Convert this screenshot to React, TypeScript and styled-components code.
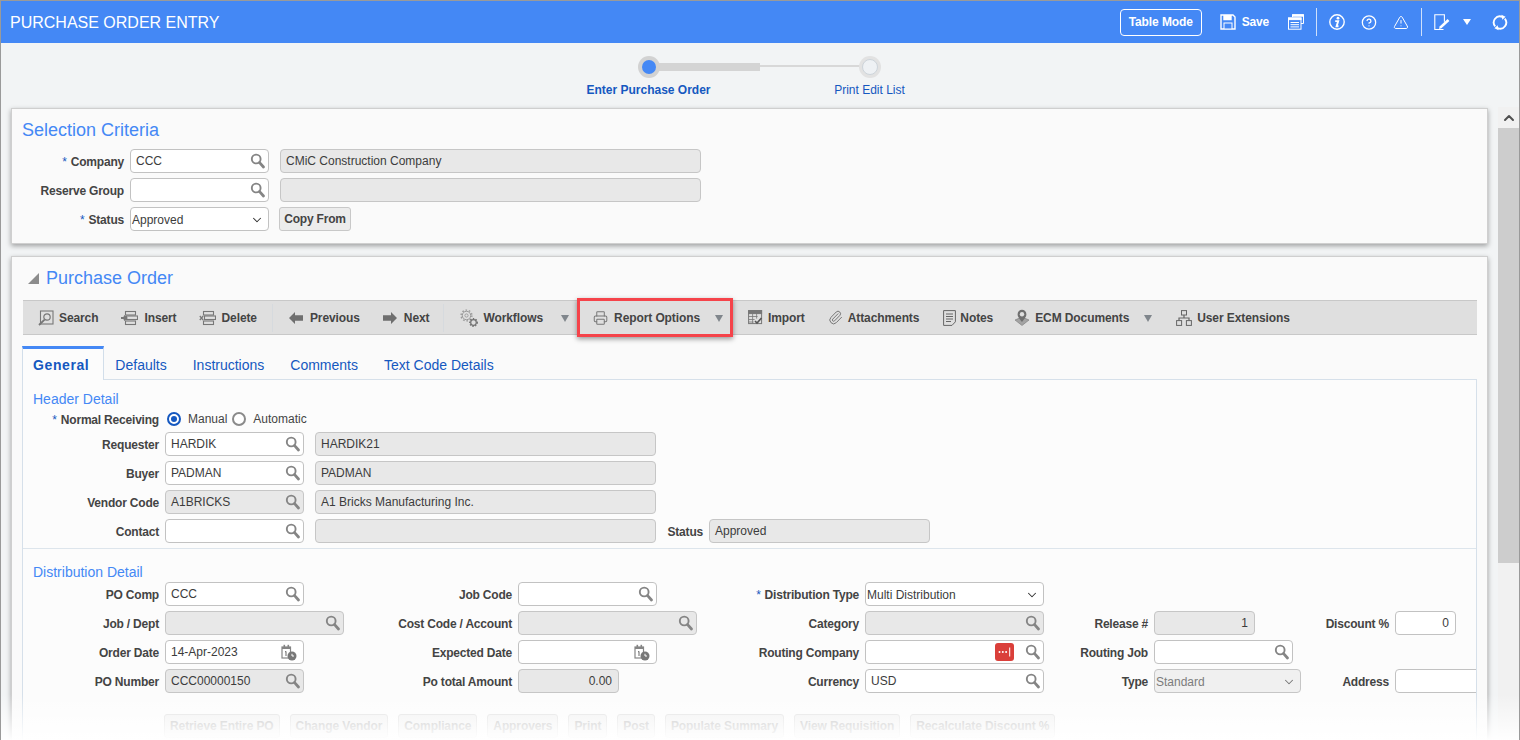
import React from "react";
import styled, { createGlobalStyle } from "styled-components";
import { ChevronDown, ChevronUp, CircleHelp, Printer, TriangleAlert, Paperclip } from "lucide-react";

const GlobalStyle = createGlobalStyle`
  html, body {
    margin: 0;
    padding: 0;
    overflow: hidden;
    background: #fff;
  }
  * {
    box-sizing: border-box;
  }
`;

const Frame = styled.div`
  position: relative;
  width: 1520px;
  height: 740px;
  overflow: hidden;
  display: flex;
  flex-flow: column;
  background: #f2f4f5;
  border: 1px solid #9a9a9a;
  border-bottom: 0;
  font-family: "Liberation Sans", Arial, sans-serif;
  font-size: 12px;
  color: #444;
`;

const Header = styled.header`
  height: 42px;
  flex: none;
  display: flex;
  align-items: center;
  justify-content: space-between;
  padding: 0 11px 0 9px;
  background: #4488f5;
  color: #fff;
`;

const PageTitle = styled.div`
  font-size: 16px;
  padding-top: 2px;
`;

const HeaderActions = styled.div`
  display: flex;
  align-items: center;
`;

const TableModeButton = styled.div`
  width: 82px;
  height: 27px;
  display: flex;
  align-items: center;
  justify-content: center;
  border: 1px solid #fff;
  border-radius: 4px;
  font-weight: bold;
  letter-spacing: -0.1px;
  margin-right: 18px;
`;

const SaveAction = styled.div`
  display: flex;
  align-items: center;
  gap: 6px;
  font-weight: bold;
  letter-spacing: -0.2px;
  margin-right: 19px;
`;

const HeaderIcon = styled.span<{ $right?: number }>`
  display: flex;
  align-items: center;
  justify-content: center;
  width: 16px;
  height: 16px;
  margin-right: ${(p) => p.$right || 0}px;
`;

const HeaderSep = styled.span`
  width: 1px;
  height: 28px;
  background: #cfe0fb;
  margin: 0 12px;
`;

const HeaderCaret = styled.span`
  width: 0;
  height: 0;
  border-left: 4.5px solid transparent;
  border-right: 4.5px solid transparent;
  border-top: 6px solid #fff;
  margin: 0 21px 0 13px;
`;

const Stepper = styled.div`
  height: 64px;
  flex: none;
  padding-right: 2px;
  display: flex;
  justify-content: center;
`;

const Step = styled.div<{ $done?: boolean }>`
  position: relative;
  width: 221px;
  padding-top: 13px;
  display: flex;
  flex-flow: column;
  align-items: center;
  color: #1558c0;
  font-weight: ${(p) => (p.$done ? "bold" : "normal")};
`;

const StepTrack = styled.div`
  position: absolute;
  top: 22px;
  left: 110px;
  width: 221px;
  height: 2px;
  background: #d8d8d8;

  &::after {
    content: "";
    position: absolute;
    top: -2px;
    left: 0;
    width: 112px;
    height: 8px;
    background: #d4d4d4;
  }
`;

const StepDot = styled.div<{ $done?: boolean }>`
  position: relative;
  width: 22px;
  height: 22px;
  border-radius: 50%;
  display: flex;
  align-items: center;
  justify-content: center;
  background: ${(p) => (p.$done ? "#d2d2d2" : "#e2e2e2")};

  &::after {
    content: "";
    width: 14px;
    height: 14px;
    border-radius: 50%;
    background: ${(p) => (p.$done ? "#4488f5" : "#eef1f4")};
    border: ${(p) => (p.$done ? "0" : "1px solid #cdd4da")};
  }
`;

const StepLabel = styled.div`
  margin-top: 5px;
  line-height: 14px;
`;

const Body = styled.div`
  flex: 1;
  min-height: 0;
  display: flex;
`;

const Content = styled.div`
  flex: 1;
  min-width: 0;
  padding: 1px 10px 0;
  display: flex;
  flex-flow: column;
  gap: 12px;
`;

const Scrollbar = styled.div`
  width: 21px;
  flex: none;
  background: #f1f1f1;
  color: #505050;
  display: flex;
  flex-flow: column;
`;

const ScrollArrow = styled.div`
  height: 21px;
  display: flex;
  align-items: center;
  justify-content: center;
`;

const ScrollThumb = styled.div`
  height: 435px;
  background: #cdcdcd;
`;

const Panel = styled.section<{ $open?: boolean }>`
  flex: ${(p) => (p.$open ? "1" : "none")};
  background: #fafafa;
  border: 1px solid #cfcfcf;
  box-shadow: 0 2px 5px rgba(0, 0, 0, 0.35);
  padding: 11px 10px 12px;
`;

const PanelTitle = styled.h2<{ $collapsible?: boolean }>`
  margin: 0;
  display: flex;
  align-items: center;
  gap: 7px;
  padding-left: ${(p) => (p.$collapsible ? "6px" : "0")};
  font-size: 18px;
  font-weight: normal;
  line-height: 21px;
  color: #4488f5;
`;

const Triangle = styled.span`
  width: 0;
  height: 0;
  border-left: 11px solid transparent;
  border-bottom: 11px solid #8c8c8c;
`;

const SelectionGrid = styled.div`
  display: grid;
  grid-template-columns: 108px 150px 421px;
  grid-auto-rows: 24px;
  row-gap: 5px;
  align-items: center;
  margin-top: 8px;
`;

const Label = styled.div`
  text-align: right;
  padding: 2px 6px 0 0;
  font-weight: bold;
  letter-spacing: -0.2px;
  color: #444;
  white-space: nowrap;
`;

const Required = styled.span`
  color: #1558c0;
  font-weight: normal;
  margin-right: 4px;
`;

const Field = styled.div<{ $w: number; $off?: boolean; $plain?: boolean }>`
  width: ${(p) => p.$w}px;
  height: 24px;
  display: flex;
  align-items: center;
  justify-content: space-between;
  flex: none;
  padding: ${(p) => (p.$plain ? "1px 2px 0 1px" : "0 2px 0 5px")};
  border: 1px solid ${(p) => (p.$off ? "#c6c6c6" : "#c2c2c2")};
  border-radius: 4px;
  background: ${(p) => (p.$off ? (p.$plain ? "#f0f0f0" : "#e8e8e8") : "#fff")};
  color: ${(p) => (p.$off && p.$plain ? "#7c7c7c" : "#3c3c3c")};
  white-space: nowrap;
`;

const RightValue = styled.span`
  flex: 1;
  text-align: right;
  padding-right: 4px;
`;

const FieldIcons = styled.span`
  display: flex;
  align-items: center;
  gap: 11px;
`;

const CalendarSlot = styled.span`
  display: flex;
  margin-right: 4px;
`;

const ChevronSlot = styled.span`
  display: flex;
  margin-right: 2px;
`;

const RedBadge = styled.span`
  width: 19px;
  height: 18px;
  border-radius: 3px;
  background: #da3f3a;
  color: #fff;
  display: flex;
  align-items: center;
  justify-content: center;
`;

const SmallButton = styled.div`
  width: 72px;
  height: 24px;
  margin-left: -1px;
  display: flex;
  align-items: center;
  justify-content: center;
  border: 1px solid #c8c8c8;
  border-radius: 3px;
  background: #ececec;
  font-weight: bold;
  letter-spacing: -0.2px;
  color: #444;
`;

const Toolbar = styled.div`
  height: 35px;
  margin: 11px 0 0 1px;
  padding-left: 15px;
  display: flex;
  align-items: center;
  background: #dfdfdf;
  border-top: 1px solid #c8c8c8;
  border-bottom: 1px solid #c8c8c8;
  font-weight: bold;
  letter-spacing: -0.1px;
  color: #444;
  white-space: nowrap;
`;

const ToolItem = styled.div<{ $right?: number; $gap?: number }>`
  display: flex;
  align-items: center;
  gap: ${(p) => p.$gap ?? 5}px;
  margin-right: ${(p) => p.$right ?? 22}px;
`;

const ToolSep = styled.span`
  width: 1px;
  height: 28px;
  background: #d6dade;
  margin-right: 16px;
  margin-left: -7px;
`;

const ToolCaret = styled.span`
  width: 0;
  height: 0;
  margin-top: 2px;
  border-left: 4.5px solid transparent;
  border-right: 4.5px solid transparent;
  border-top: 7px solid #80868c;
`;

const Highlight = styled.div`
  width: 156px;
  height: 39px;
  flex: none;
  margin: 0 15px 0 -14px;
  padding: 0 7px 0 13px;
  display: flex;
  align-items: center;
  border: 3px solid #f5434a;
  box-shadow: 0 2px 5px rgba(0, 0, 0, 0.4);
`;

const HighlightText = styled.span`
  margin: 0 15px 0 6px;
`;

const TabList = styled.div`
  display: flex;
  margin-top: 11px;
  height: 34px;
`;

const Tab = styled.div<{ $active?: boolean }>`
  display: flex;
  align-items: center;
  padding: ${(p) => (p.$active ? "0 14px 0 10px" : "0 12px")};
  margin-right: ${(p) => (p.$active ? "-2px" : "0")};
  font-size: 14px;
  color: #1558c0;
  font-weight: ${(p) => (p.$active ? "bold" : "normal")};
  letter-spacing: ${(p) => (p.$active ? "0.6px" : "0")};
  border-top: 3px solid ${(p) => (p.$active ? "#4488f5" : "transparent")};
  border-left: 1px solid ${(p) => (p.$active ? "#d2deea" : "transparent")};
  border-right: 1px solid ${(p) => (p.$active ? "#d2deea" : "transparent")};
  background: ${(p) => (p.$active ? "#fcfcfc" : "transparent")};
  position: relative;
  z-index: 1;
`;

const TabBody = styled.div`
  border: 1px solid #d6e0ea;
  margin-top: -1px;
  height: 400px;
  background: #fcfcfc;
`;

const Section = styled.div<{ $divided?: boolean }>`
  padding: ${(p) => (p.$divided ? "15px" : "11px")} 0 5px 10px;
  border-bottom: ${(p) => (p.$divided ? "0" : "1px solid #dde5ec")};
`;

const SectionTitle = styled.div`
  font-size: 14px;
  line-height: 16px;
  color: #4488f5;
`;

const ReceivingRow = styled.div`
  display: flex;
  align-items: center;
  height: 18px;
  margin-top: 3px;
`;

const ReceivingLabel = styled(Label)`
  width: 132px;
`;

const Radio = styled.span<{ $on?: boolean }>`
  width: 14px;
  height: 14px;
  margin: 0 7px 0 ${(p) => (p.$on ? "2px" : "5px")};
  border-radius: 50%;
  background: #fff;
  border: ${(p) => (p.$on ? "2px solid #1558c0" : "2px solid #8a8a8a")};
  display: flex;
  align-items: center;
  justify-content: center;

  &::after {
    content: "";
    width: 6px;
    height: 6px;
    border-radius: 50%;
    background: ${(p) => (p.$on ? "#1558c0" : "transparent")};
  }
`;

const HeaderGrid = styled.div`
  display: grid;
  grid-template-columns: 132px 150px 341px 53px 221px;
  grid-auto-rows: 24px;
  row-gap: 5px;
  align-items: center;
  margin-top: 4px;
`;

const DistGrid = styled.div`
  display: grid;
  grid-template-columns: 132px 179px 174px 179px 168px 179px 110px 147px 94px 82px;
  grid-auto-rows: 24px;
  row-gap: 5px;
  align-items: center;
  margin-top: 2px;
  overflow: hidden;
`;

const GridGap = styled.div<{ $span?: number }>`
  grid-column: span ${(p) => p.$span || 1};
`;

const ActionRow = styled.div`
  display: flex;
  gap: 10px;
  margin: 21px 0 0 131px;
`;

const ActionButton = styled.div`
  height: 24px;
  padding: 0 5px;
  display: flex;
  align-items: center;
  border: 1px solid #dedede;
  border-radius: 3px;
  background: #f1f1f1;
  color: #b4b4b4;
  font-weight: bold;
  letter-spacing: -0.1px;
  white-space: nowrap;
`;

const BottomFade = styled.div`
  position: absolute;
  left: 0;
  right: 0;
  bottom: 0;
  height: 46px;
  pointer-events: none;
  background: linear-gradient(to bottom, rgba(255, 255, 255, 0), rgba(255, 255, 255, 0.98));
`;

const Search = () => (
  <svg width="16" height="16" viewBox="0 0 16 16" fill="none" stroke="#858585">
    <circle cx="6.2" cy="6" r="4.4" strokeWidth="1.9" />
    <path d="M9.6 9.6l3.9 4.4" strokeWidth="2.8" strokeLinecap="round" />
  </svg>
);

const Calendar = () => (
  <svg width="16" height="17" viewBox="0 0 16 17" fill="none">
    <rect x="1" y="3" width="8.5" height="11" stroke="#858585" strokeWidth="1.2" />
    <rect x="2.5" y="0.8" width="1.6" height="3" fill="#858585" />
    <rect x="6.5" y="0.8" width="1.6" height="3" fill="#858585" />
    <rect x="1" y="3" width="8.5" height="2" fill="#858585" />
    <path d="M4 8l1-.6V12" stroke="#666" strokeWidth="1" />
    <circle cx="11" cy="12" r="4.5" fill="#777" />
    <path d="M11 9.8V12h2" stroke="#fff" strokeWidth="1" />
  </svg>
);

const DotsIcon = () => (
  <svg width="13" height="10" viewBox="0 0 13 10" fill="#fff">
    <circle cx="1.5" cy="5" r="1" />
    <circle cx="4.8" cy="5" r="1" />
    <circle cx="8.1" cy="5" r="1" />
    <rect x="11.2" y="0.5" width="1" height="9" />
  </svg>
);

const SaveIcon = () => (
  <svg width="16" height="16" viewBox="0 0 16 16" fill="none" stroke="#fff" strokeWidth="1.4">
    <path d="M1 1h12l2 2v12H1z" />
    <path d="M4 1v4.5h7V1" fill="#fff" />
    <rect x="3.5" y="8.5" width="9" height="6.5" fill="#fff" stroke="none" />
    <rect x="4.5" y="9.5" width="7" height="5" fill="#4488f5" stroke="none" />
  </svg>
);

const WindowsIcon = () => (
  <svg width="16" height="16" viewBox="0 0 16 16" fill="none" stroke="#fff" strokeWidth="1">
    <path d="M4.5 3V.8h11v8.7h-2.5" />
    <rect x="4.5" y="0.8" width="11" height="1.4" fill="#fff" />
    <rect x="0.5" y="4" width="12.5" height="11.2" fill="#4488f5" />
    <rect x="0.5" y="4" width="12.5" height="1.6" fill="#fff" />
    <path d="M2.5 8.5h8.5M2.5 10.7h8.5M2.5 12.9h8.5" />
  </svg>
);

const InfoIcon = () => (
  <svg width="16" height="16" viewBox="0 0 16 16" fill="none" stroke="#fff">
    <circle cx="8" cy="8" r="7.2" strokeWidth="1.4" />
    <circle cx="9" cy="4.2" r="1.4" fill="#fff" stroke="none" />
    <path d="M6.2 7.1h3l-1.6 5.2h1.9" strokeWidth="1.9" />
  </svg>
);

const EditIcon = () => (
  <svg width="16" height="16" viewBox="0 0 16 16" fill="none" stroke="#fff">
    <path d="M9.5 15.5H.8V.8h9.6v7" strokeWidth="1.1" />
    <path d="M5 15l.6-2.6 8-7.4 1.8 1.9-8 7.4z" fill="#fff" stroke="none" />
  </svg>
);

const ReloadIcon = () => (
  <svg width="17" height="17" viewBox="0 0 17 17" fill="none" stroke="#fff" strokeWidth="2">
    <path d="M3.4 12.6A6.5 6.5 0 0 1 11 2.5" />
    <path d="M13.6 4.4A6.5 6.5 0 0 1 6 14.5" />
    <path d="M10 .2l4.4 2.2-3.4 3.2z" fill="#fff" stroke="none" />
    <path d="M7 16.8L2.6 14.6 6 11.4z" fill="#fff" stroke="none" />
  </svg>
);

const DocSearchIcon = () => (
  <svg width="16" height="16" viewBox="0 0 16 16" fill="none" stroke="#777">
    <rect x="2.5" y="1" width="12.5" height="13" strokeWidth="1.1" />
    <circle cx="9" cy="7" r="3.2" strokeWidth="1.2" />
    <path d="M6.6 9.6L1 15" strokeWidth="1.8" />
  </svg>
);

const RowsIcon = ({ mark }: { mark: "plus" | "x" }) => (
  <svg width="17" height="16" viewBox="0 0 17 16" fill="none" stroke="#777">
    <rect x="4.5" y="1.5" width="10" height="3.5" strokeWidth="1.1" />
    <rect x="5.5" y="6" width="11" height="3.5" strokeWidth="1.1" />
    <rect x="4.5" y="11" width="10" height="3.5" strokeWidth="1.1" />
    {mark === "plus" ? (
      <path d="M0 8h4.5M3 5.8L5.5 8 3 10.2" strokeWidth="1.8" />
    ) : (
      <path d="M.8 6l3.4 4M4.2 6L.8 10" strokeWidth="1.2" />
    )}
  </svg>
);

const ArrowIcon = ({ left }: { left?: boolean }) => (
  <svg width="14" height="12" viewBox="0 0 14 12" fill="#6f6f6f">
    <path d={left ? "M0 6l6-6v3.2h8v5.6H6V12z" : "M14 6L8 0v3.2H0v5.6h8V12z"} />
  </svg>
);

const GearsIcon = () => (
  <svg width="18" height="18" viewBox="0 0 18 18" fill="none">
    <circle cx="6.5" cy="6.5" r="4.2" stroke="#9a9a9a" strokeWidth="1" />
    <circle cx="6.5" cy="6.5" r="5.4" stroke="#9a9a9a" strokeWidth="1.4" strokeDasharray="1.6 1.8" />
    <circle cx="6.5" cy="6.5" r="1.6" stroke="#9a9a9a" strokeWidth="0.9" />
    <circle cx="13.5" cy="13.5" r="2.8" stroke="#707070" strokeWidth="1.2" />
    <circle cx="13.5" cy="13.5" r="3.8" stroke="#707070" strokeWidth="1.3" strokeDasharray="1.4 1.4" />
  </svg>
);

const ImportIcon = () => (
  <svg width="15" height="15" viewBox="0 0 15 15" fill="none" stroke="#777">
    <rect x="0.6" y="0.6" width="13" height="13" strokeWidth="1" />
    <rect x="0.6" y="0.6" width="13" height="3" fill="#777" />
    <path d="M.6 6.5h9M.6 9.5h6M.6 12h5M4.6 3.6v10M8.6 3.6v5" strokeWidth="0.8" />
    <path d="M7 11l2 2 4.5-5" stroke="#555" strokeWidth="1.6" />
  </svg>
);

const NotesIcon = () => (
  <svg width="13" height="16" viewBox="0 0 13 16" fill="none" stroke="#666" strokeWidth="1">
    <path d="M.6.6h11.8v11.2l-3.4 3.6H.6z" />
    <path d="M3 4h7M3 6.5h7M3 9h7M3 11.5h5" />
  </svg>
);

const EcmIcon = () => (
  <svg width="16" height="17" viewBox="0 0 16 17" fill="none">
    <path d="M1 11l7-3 7 3-7 5.5z" fill="#a3a3a3" stroke="#777" strokeWidth="0.6" />
    <path d="M8 13C5 9 3.6 7.6 3.6 5.2a4.4 4.4 0 018.8 0C12.4 7.6 11 9 8 13z" fill="#6f6f6f" />
    <circle cx="8" cy="5.2" r="2.2" fill="#dfdfdf" />
  </svg>
);

const TreeIcon = () => (
  <svg width="16" height="16" viewBox="0 0 16 16" fill="none" stroke="#666" strokeWidth="1">
    <rect x="5.5" y="0.6" width="5" height="4.4" />
    <rect x="0.6" y="10.6" width="5" height="4.8" />
    <rect x="10.4" y="10.6" width="5" height="4.8" />
    <path d="M8 5v3M3 10.6V8h10v2.6" strokeWidth="1.2" />
  </svg>
);

const LookupField = ({ w, value, off }: { w: number; value?: string; off?: boolean }) => (
  <Field $w={w} $off={off}>
    <span>{value}</span>
    <Search />
  </Field>
);

const TextField = ({ w, value }: { w: number; value?: string }) => (
  <Field $w={w} $off>
    <span>{value}</span>
  </Field>
);

const DateField = ({ value }: { value?: string }) => (
  <Field $w={139}>
    <span>{value}</span>
    <CalendarSlot>
      <Calendar />
    </CalendarSlot>
  </Field>
);

const SelectField = ({ w, value, off }: { w: number; value: string; off?: boolean }) => (
  <Field $w={w} $off={off} $plain>
    <span>{value}</span>
    <ChevronSlot>
      <ChevronDown size={14} strokeWidth={1.8} color={off ? "#777" : "#333"} />
    </ChevronSlot>
  </Field>
);

const actionButtons = [
  "Retrieve Entire PO",
  "Change Vendor",
  "Compliance",
  "Approvers",
  "Print",
  "Post",
  "Populate Summary",
  "View Requisition",
  "Recalculate Discount %",
];

export default function App() {
  return (
    <Frame>
      <GlobalStyle />
      <Header>
        <PageTitle>PURCHASE ORDER ENTRY</PageTitle>
        <HeaderActions>
          <TableModeButton>Table Mode</TableModeButton>
          <SaveAction>
            <SaveIcon />
            Save
          </SaveAction>
          <HeaderIcon>
            <WindowsIcon />
          </HeaderIcon>
          <HeaderSep />
          <HeaderIcon $right={16}>
            <InfoIcon />
          </HeaderIcon>
          <HeaderIcon $right={16}>
            <CircleHelp size={19} strokeWidth={1.9} />
          </HeaderIcon>
          <HeaderIcon>
            <TriangleAlert size={19} strokeWidth={1.5} />
          </HeaderIcon>
          <HeaderSep />
          <HeaderIcon>
            <EditIcon />
          </HeaderIcon>
          <HeaderCaret />
          <HeaderIcon>
            <ReloadIcon />
          </HeaderIcon>
        </HeaderActions>
      </Header>

      <Stepper>
        <Step $done>
          <StepTrack />
          <StepDot $done />
          <StepLabel>Enter Purchase Order</StepLabel>
        </Step>
        <Step>
          <StepDot />
          <StepLabel>Print Edit List</StepLabel>
        </Step>
      </Stepper>

      <Body>
        <Content>
          <Panel>
            <PanelTitle>Selection Criteria</PanelTitle>
            <SelectionGrid>
              <Label>
                <Required>*</Required>Company
              </Label>
              <LookupField w={139} value="CCC" />
              <TextField w={421} value="CMiC Construction Company" />
              <Label>Reserve Group</Label>
              <LookupField w={139} />
              <TextField w={421} />
              <Label>
                <Required>*</Required>Status
              </Label>
              <SelectField w={139} value="Approved" />
              <SmallButton>Copy From</SmallButton>
            </SelectionGrid>
          </Panel>

          <Panel $open>
            <PanelTitle $collapsible>
              <Triangle />
              Purchase Order
            </PanelTitle>
            <Toolbar>
              <ToolItem $right={23}>
                <DocSearchIcon />
                Search
              </ToolItem>
              <ToolItem $gap={6}>
                <RowsIcon mark="plus" />
                Insert
              </ToolItem>
              <ToolItem $gap={6}>
                <RowsIcon mark="x" />
                Delete
              </ToolItem>
              <ToolSep />
              <ToolItem $gap={7} $right={23}>
                <ArrowIcon left />
                Previous
              </ToolItem>
              <ToolItem $gap={7} $right={21}>
                <ArrowIcon />
                Next
              </ToolItem>
              <ToolSep />
              <ToolItem $right={18}>
                <GearsIcon />
                Workflows
              </ToolItem>
              <ToolItem>
                <ToolCaret />
              </ToolItem>
              <Highlight>
                <Printer size={16} strokeWidth={1.6} color="#777" />
                <HighlightText>Report Options</HighlightText>
                <ToolCaret />
              </Highlight>
              <ToolItem $right={23}>
                <ImportIcon />
                Import
              </ToolItem>
              <ToolItem $right={24}>
                <Paperclip size={15} strokeWidth={1.6} color="#777" />
                Attachments
              </ToolItem>
              <ToolItem $gap={4} $right={21}>
                <NotesIcon />
                Notes
              </ToolItem>
              <ToolItem $right={15}>
                <EcmIcon />
                ECM Documents
              </ToolItem>
              <ToolItem $right={24}>
                <ToolCaret />
              </ToolItem>
              <ToolItem>
                <TreeIcon />
                User Extensions
              </ToolItem>
            </Toolbar>

            <TabList>
              <Tab $active>General</Tab>
              <Tab>Defaults</Tab>
              <Tab>Instructions</Tab>
              <Tab>Comments</Tab>
              <Tab>Text Code Details</Tab>
            </TabList>
            <TabBody>
              <Section>
                <SectionTitle>Header Detail</SectionTitle>
                <ReceivingRow>
                  <ReceivingLabel>
                    <Required>*</Required>Normal Receiving
                  </ReceivingLabel>
                  <Radio $on />
                  Manual
                  <Radio />
                  Automatic
                </ReceivingRow>
                <HeaderGrid>
                  <Label>Requester</Label>
                  <LookupField w={139} value="HARDIK" />
                  <TextField w={341} value="HARDIK21" />
                  <GridGap $span={2} />
                  <Label>Buyer</Label>
                  <LookupField w={139} value="PADMAN" />
                  <TextField w={341} value="PADMAN" />
                  <GridGap $span={2} />
                  <Label>Vendor Code</Label>
                  <LookupField w={139} value="A1BRICKS" off />
                  <TextField w={341} value="A1 Bricks Manufacturing Inc." />
                  <GridGap $span={2} />
                  <Label>Contact</Label>
                  <LookupField w={139} />
                  <TextField w={341} />
                  <Label>Status</Label>
                  <TextField w={221} value="Approved" />
                </HeaderGrid>
              </Section>

              <Section $divided>
                <SectionTitle>Distribution Detail</SectionTitle>
                <DistGrid>
                  <Label>PO Comp</Label>
                  <LookupField w={139} value="CCC" />
                  <Label>Job Code</Label>
                  <LookupField w={139} />
                  <Label>
                    <Required>*</Required>Distribution Type
                  </Label>
                  <SelectField w={179} value="Multi Distribution" />
                  <GridGap $span={4} />

                  <Label>Job / Dept</Label>
                  <LookupField w={179} off />
                  <Label>Cost Code / Account</Label>
                  <LookupField w={179} off />
                  <Label>Category</Label>
                  <LookupField w={179} off />
                  <Label>Release #</Label>
                  <Field $w={101} $off>
                    <RightValue>1</RightValue>
                  </Field>
                  <Label>Discount %</Label>
                  <Field $w={61}>
                    <RightValue>0</RightValue>
                  </Field>

                  <Label>Order Date</Label>
                  <DateField value="14-Apr-2023" />
                  <Label>Expected Date</Label>
                  <DateField />
                  <Label>Routing Company</Label>
                  <Field $w={179}>
                    <span />
                    <FieldIcons>
                      <RedBadge>
                        <DotsIcon />
                      </RedBadge>
                      <Search />
                    </FieldIcons>
                  </Field>
                  <Label>Routing Job</Label>
                  <LookupField w={139} />
                  <GridGap $span={2} />

                  <Label>PO Number</Label>
                  <LookupField w={139} value="CCC00000150" off />
                  <Label>Po total Amount</Label>
                  <Field $w={101} $off>
                    <RightValue>0.00</RightValue>
                  </Field>
                  <Label>Currency</Label>
                  <LookupField w={179} value="USD" />
                  <Label>Type</Label>
                  <SelectField w={147} value="Standard" off />
                  <Label>Address</Label>
                  <Field $w={120} />
                </DistGrid>
                <ActionRow>
                  {actionButtons.map((name) => (
                    <ActionButton key={name}>{name}</ActionButton>
                  ))}
                </ActionRow>
              </Section>
            </TabBody>
          </Panel>
        </Content>

        <Scrollbar>
          <ScrollArrow>
            <ChevronUp size={16} strokeWidth={3} />
          </ScrollArrow>
          <ScrollThumb />
        </Scrollbar>
      </Body>
      <BottomFade />
    </Frame>
  );
}
